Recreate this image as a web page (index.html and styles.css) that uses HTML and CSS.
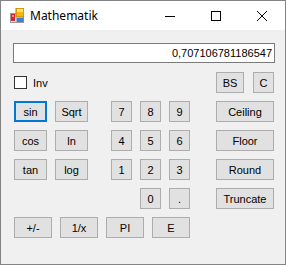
FILE: index.html
```html
<!DOCTYPE html>
<html>
<head>
<meta charset="utf-8">
<link rel="stylesheet" href="styles.css">
</head>
<body>
<div class="window">
  <div class="titlebar">
    <svg class="app-icon" width="14" height="15" viewBox="0 0 14 15">
      <rect x="0.5" y="5.5" width="13" height="9" fill="#e8e8e8" stroke="#9a9a9a"/>
      <rect x="6" y="0" width="8" height="9" fill="#f5b80e" stroke="#b97f00" stroke-width="1"/>
      <rect x="7" y="1" width="6" height="3" fill="#ffe27a"/>
      <rect x="1" y="6" width="4" height="7" fill="#d8262b"/>
      <rect x="2" y="7" width="2" height="2" fill="#ff8a8a"/>
      <rect x="6.5" y="10" width="7" height="4" fill="#3d7fd6"/>
    </svg>
    <span class="title">Mathematik</span>
    <div class="caption">
      <div class="cap-btn">
        <svg width="10" height="10" viewBox="0 0 10 10"><line x1="0" y1="5.5" x2="10" y2="5.5" stroke="#000" stroke-width="1"/></svg>
      </div>
      <div class="cap-btn">
        <svg width="10" height="10" viewBox="0 0 10 10"><rect x="0.5" y="0.5" width="9" height="9" fill="none" stroke="#000" stroke-width="1"/></svg>
      </div>
      <div class="cap-btn">
        <svg width="10" height="10" viewBox="0 0 10 10"><path d="M0 0 L10 10 M10 0 L0 10" stroke="#000" stroke-width="1"/></svg>
      </div>
    </div>
  </div>
  <div class="client">
    <div class="display">0,707106781186547</div>
    <div class="pad">
      <label class="inv c-left"><span class="box"></span><span class="inv-text">Inv</span></label>
      <div class="edit c-right"><button class="btn w-bs">BS</button><button class="btn w-num">C</button></div>

      <button class="btn focus c-1">sin</button>
      <button class="btn c-2">Sqrt</button>
      <button class="btn c-n1">7</button>
      <button class="btn c-n2">8</button>
      <button class="btn c-n3">9</button>
      <button class="btn c-right">Ceiling</button>

      <button class="btn c-1">cos</button>
      <button class="btn c-2">ln</button>
      <button class="btn c-n1">4</button>
      <button class="btn c-n2">5</button>
      <button class="btn c-n3">6</button>
      <button class="btn c-right">Floor</button>

      <button class="btn c-1">tan</button>
      <button class="btn c-2">log</button>
      <button class="btn c-n1">1</button>
      <button class="btn c-n2">2</button>
      <button class="btn c-n3">3</button>
      <button class="btn c-right">Round</button>

      <button class="btn c-n2">0</button>
      <button class="btn c-n3">.</button>
      <button class="btn c-right">Truncate</button>

      <div class="bottom">
        <button class="btn w-wide">+/-</button>
        <button class="btn w-wide">1/x</button>
        <button class="btn w-wide">PI</button>
        <button class="btn w-wide">E</button>
      </div>
    </div>
  </div>
</div>
</body>
</html>
```
FILE: styles.css
```css
html, body {
  margin: 0;
  padding: 0;
  background: #f0f0f0;
}

.window {
  width: 286px;
  height: 265px;
  box-sizing: border-box;
  border: 1px solid #838383;
  background: #f0f0f0;
  display: flex;
  flex-direction: column;
  font-family: "Liberation Sans", Arial, sans-serif;
  font-size: 11px;
  color: #000;
}

.titlebar {
  flex: none;
  height: 29px;
  background: #fff;
  display: flex;
  align-items: center;
}

.app-icon {
  margin-left: 9px;
  flex: none;
}

.title {
  margin-left: 6px;
  font-family: "Noto Sans", "Open Sans", sans-serif;
  font-size: 12px;
  color: #000;
}

.caption {
  margin-left: auto;
  display: flex;
}

.cap-btn {
  width: 46px;
  height: 29px;
  display: flex;
  align-items: center;
  justify-content: center;
}

.client {
  padding: 13px 0 0 12px;
}

.display {
  width: 262px;
  height: 20px;
  box-sizing: border-box;
  border: 1px solid #7a7a7a;
  background: #fff;
  text-align: right;
  padding-right: 2px;
  line-height: 18px;
  font-size: 11px;
}

.pad {
  margin-top: 9px;
  margin-left: 1px;
  display: grid;
  grid-template-columns: 33px 8px 33px 23px 21px 8px 21px 8px 21px 26px 58px;
  grid-template-rows: repeat(6, 21px);
  row-gap: 8px;
}

.btn {
  box-sizing: border-box;
  height: 21px;
  margin: 0;
  padding: 0;
  border: 1px solid #adadad;
  background: #e1e1e1;
  font-family: "Liberation Sans", Arial, sans-serif;
  font-size: 11px;
  color: #000;
  border-radius: 0;
}

.btn.focus {
  border: 2px solid #0078d7;
}

.c-1 { grid-column: 1; }
.c-2 { grid-column: 3; }
.c-n1 { grid-column: 5; }
.c-n2 { grid-column: 7; }
.c-n3 { grid-column: 9; }
.c-right { grid-column: 11; }
.c-left { grid-column: 1 / 5; }

.inv {
  display: flex;
  align-items: center;
}

.box {
  width: 13px;
  height: 13px;
  box-sizing: border-box;
  border: 1px solid #333;
  background: #fff;
}

.inv-text {
  margin-left: 6px;
  font-size: 11px;
}

.edit {
  display: flex;
  gap: 9px;
}

.w-bs { width: 28px; }
.w-num { width: 21px; }
.w-wide { width: 38px; }

.bottom {
  grid-column: 1 / -1;
  display: flex;
  gap: 8px;
}
```
